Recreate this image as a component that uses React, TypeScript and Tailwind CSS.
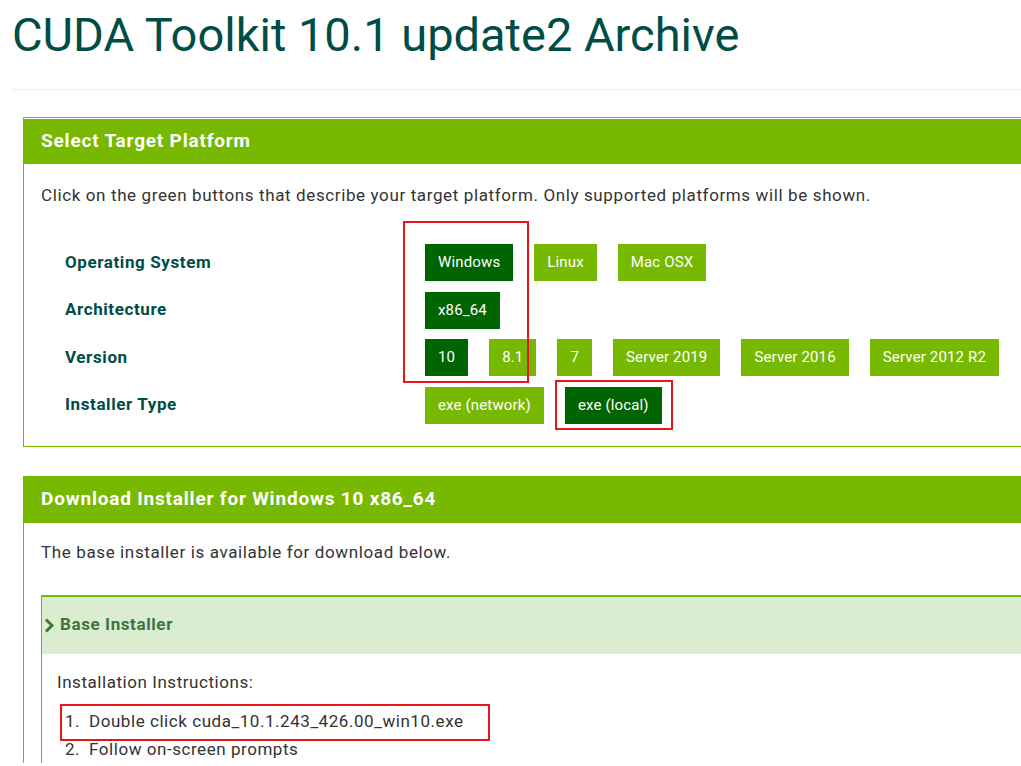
const font = { fontFamily: "Roboto, 'Noto Sans', sans-serif" }

type Opt = { label: string; active?: boolean; boxed?: boolean }

const rows: { name: string; options: Opt[] }[] = [
  {
    name: "Operating System",
    options: [{ label: "Windows", active: true }, { label: "Linux" }, { label: "Mac OSX" }],
  },
  { name: "Architecture", options: [{ label: "x86_64", active: true }] },
  {
    name: "Version",
    options: [
      { label: "10", active: true },
      { label: "8.1" },
      { label: "7" },
      { label: "Server 2019" },
      { label: "Server 2016" },
      { label: "Server 2012 R2" },
    ],
  },
  {
    name: "Installer Type",
    options: [{ label: "exe (network)" }, { label: "exe (local)", active: true, boxed: true }],
  },
]

function PlatformButton({ opt }: { opt: Opt }) {
  return (
    <span className="relative">
      <span
        className={
          "flex h-[37px] items-center px-[13px] text-[15px] tracking-[0.15px] text-white " +
          (opt.active ? "bg-[#006400]" : "bg-[#76b900]")
        }
      >
        {opt.label}
      </span>
      {opt.boxed && (
        <span className="pointer-events-none absolute -top-[7px] -right-[11px] -bottom-[6px] -left-[10px] border-2 border-[#e8161b]" />
      )}
    </span>
  )
}

export default function App() {
  return (
    <div className="min-h-screen w-full overflow-hidden bg-white pl-3" style={font}>
      <h1 className="pt-[8px] text-[47px] leading-[54px] font-normal text-[#004d46]">
        CUDA Toolkit 10.1 update2 Archive
      </h1>
      <div className="mt-[27px] w-[1100px] border-t border-[#eeeeee]" />

      <div className="relative mt-[27px] ml-[11px] w-[1100px] border border-[#76b900]">
        <div className="mt-px flex h-[45px] items-center bg-[#76b900] px-[17px] text-[19px] font-bold tracking-[0.8px] text-white">
          Select Target Platform
        </div>
        <div className="px-[17px] pt-[18px] pb-[22px]">
          <p className="text-[17px] leading-[26px] tracking-[0.62px] text-[#333333]">
            Click on the green buttons that describe your target platform. Only supported platforms will be shown.
          </p>
          <div className="relative mt-[36px] grid grid-cols-[360px_1fr] gap-y-[10.5px] pl-[24px]">
            {rows.map((row) => (
              <div key={row.name} className="contents">
                <div className="flex h-[37px] items-center text-[17px] font-bold tracking-[0.6px] text-[#004d46]">
                  {row.name}
                </div>
                <div className="flex gap-[21px]">
                  {row.options.map((opt) => (
                    <PlatformButton key={opt.label} opt={opt} />
                  ))}
                </div>
              </div>
            ))}
            <span className="pointer-events-none absolute top-[-23px] left-[362px] h-[162px] w-[126px] border-2 border-[#e8161b]" />
          </div>
        </div>
      </div>

      <div className="mt-[29px] ml-[11px] w-[1100px] border border-b-0 border-[#76b900]">
        <div className="flex h-[46px] items-center bg-[#76b900] px-[17px] text-[19px] font-bold tracking-[0.8px] text-white">
          Download Installer for Windows 10 x86_64
        </div>
        <div className="pt-[16px] pl-[17px]">
          <p className="text-[17px] leading-[26px] tracking-[0.62px] text-[#333333]">
            The base installer is available for download below.
          </p>
          <div className="mt-[30px] border-t-2 border-l border-[#76b900]">
            <div className="flex h-[57px] items-center gap-[6px] bg-[#dbedd1] pl-[2px] text-[17px] font-bold tracking-[0.6px] text-[#3c763d]">
              <svg width="10" height="15" viewBox="0 0 10 15" className="shrink-0">
                <polyline
                  points="2,1.5 8,7.5 2,13.5"
                  fill="none"
                  stroke="#3c763d"
                  strokeWidth="3"
                  strokeLinejoin="miter"
                />
              </svg>
              Base Installer
            </div>
            <div className="pt-[15px] pl-[15px] text-[17px] tracking-[0.55px] text-[#333333]">
              <p className="leading-[26px]">Installation Instructions:</p>
              <ol className="mt-[12px] pl-[8px] leading-[28px]">
                <li className="relative flex">
                  <span className="w-[24px]">1.</span>
                  Double click cuda_10.1.243_426.00_win10.exe
                  <span className="pointer-events-none absolute top-[-3px] left-[-5px] h-[37px] w-[430px] border-2 border-[#e8161b]" />
                </li>
                <li className="flex">
                  <span className="w-[24px]">2.</span>
                  Follow on-screen prompts
                </li>
              </ol>
            </div>
          </div>
        </div>
      </div>
    </div>
  )
}
